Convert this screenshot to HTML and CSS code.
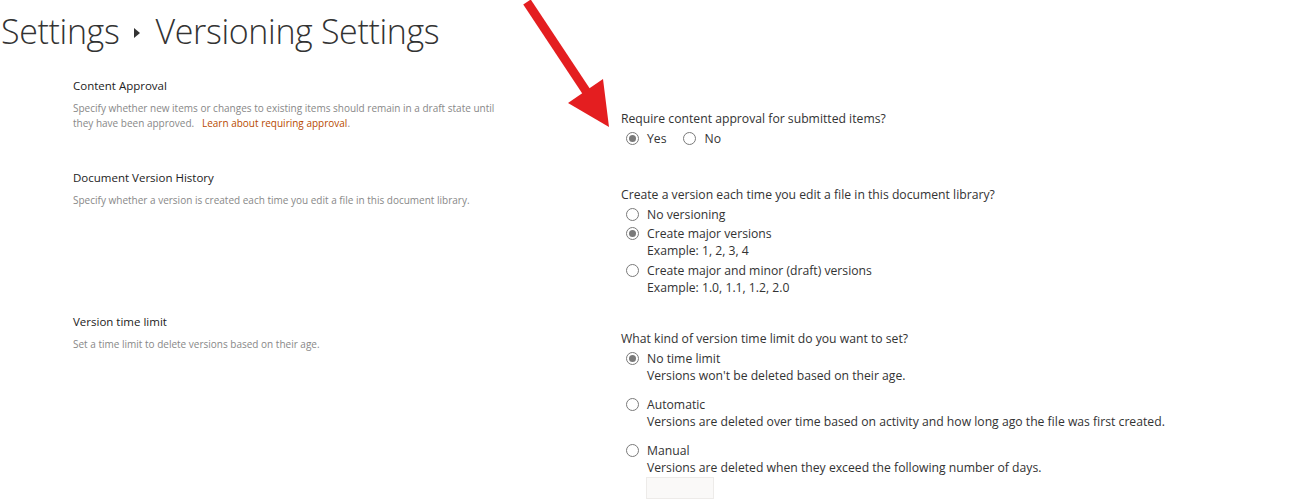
FILE: index.html
```html
<!DOCTYPE html>
<html lang="en">
  <head>
    <meta charset="UTF-8" />
    <title>Versioning Settings</title>
    <link rel="stylesheet" href="styles.css">
  </head>
  <body>
    <h1 class="page-title">
      <span>Settings</span>
      <span class="crumb-sep"></span>
      <span>Versioning Settings</span>
    </h1>

    <!-- flecha roja de anotación -->
    <svg class="annot-arrow" width="140" height="135" viewBox="0 0 140 135">
      <line x1="47" y1="2" x2="108" y2="94" stroke="#e41e20" stroke-width="9" />
      <polygon points="88,103 123,79 129,127" fill="#e41e20" />
    </svg>

    <div class="settings">
      <!-- Content Approval -->
      <section class="row row-approval">
        <div class="label-col">
          <h3>Content Approval</h3>
          <p>Specify whether new items or changes to existing items should remain in a draft state until they have been approved.&nbsp;&nbsp; <a href="#">Learn about requiring approval</a>.</p>
        </div>
        <div class="field-col">
          <div class="question">Require content approval for submitted items?</div>
          <div class="inline-opts">
            <label class="opt"><input type="radio" name="approval" checked><span>Yes</span></label>
            <label class="opt"><input type="radio" name="approval"><span>No</span></label>
          </div>
        </div>
      </section>

      <!-- Document Version History -->
      <section class="row row-history">
        <div class="label-col">
          <h3>Document Version History</h3>
          <p>Specify whether a version is created each time you edit a file in this document library.</p>
        </div>
        <div class="field-col">
          <div class="question">Create a version each time you edit a file in this document library?</div>
          <label class="opt"><input type="radio" name="history"><span>No versioning</span></label>
          <label class="opt"><input type="radio" name="history" checked><span>Create major versions</span></label>
          <div class="hint">Example: 1, 2, 3, 4</div>
          <label class="opt"><input type="radio" name="history"><span>Create major and minor (draft) versions</span></label>
          <div class="hint">Example: 1.0, 1.1, 1.2, 2.0</div>
        </div>
      </section>

      <!-- Version time limit -->
      <section class="row row-limit">
        <div class="label-col">
          <h3>Version time limit</h3>
          <p>Set a time limit to delete versions based on their age.</p>
        </div>
        <div class="field-col">
          <div class="question">What kind of version time limit do you want to set?</div>
          <label class="opt"><input type="radio" name="limit" checked><span>No time limit</span></label>
          <div class="hint spaced">Versions won't be deleted based on their age.</div>
          <label class="opt"><input type="radio" name="limit"><span>Automatic</span></label>
          <div class="hint spaced">Versions are deleted over time based on activity and how long ago the file was first created.</div>
          <label class="opt"><input type="radio" name="limit"><span>Manual</span></label>
          <div class="hint">Versions are deleted when they exceed the following number of days.</div>
          <input class="days" type="text">
        </div>
      </section>
    </div>
  </body>
</html>
```

FILE: styles.css
```css
body {
  margin: 0;
  font-family: "Open Sans", "Noto Sans", Arial, sans-serif;
  color: #333;
  background: #fff;
  position: relative;
  overflow: hidden;
}

.page-title {
  margin: 0;
  padding: 6px 0 0 1px;
  height: 50px;
  font-weight: 300;
  font-size: 34px;
  line-height: 42px;
  color: #333;
  display: flex;
  align-items: center;
  gap: 15px;
  letter-spacing: -0.35px;
}

.crumb-sep {
  width: 0;
  height: 0;
  border-top: 5px solid transparent;
  border-bottom: 5px solid transparent;
  border-left: 6px solid #333;
  margin-top: 3px;
}

.annot-arrow {
  position: absolute;
  left: 480px;
  top: 0;
}

.settings {
  padding-left: 73px;
}

.row {
  display: grid;
  grid-template-columns: 548px auto;
}

.label-col h3 {
  margin: 0;
  font-size: 11.5px;
  font-weight: 400;
  line-height: 16px;
  color: #222;
}

.label-col p {
  margin: 7px 0 0;
  width: 440px;
  font-size: 10px;
  line-height: 15px;
  color: #888;
}

.label-col a {
  color: #b84a00;
  text-decoration: none;
}

.field-col {
  font-size: 12.2px;
  color: #333;
  display: flex;
  flex-direction: column;
  align-items: flex-start;
  padding-top: 16px;
}

.question {
  line-height: 18px;
  margin-bottom: 1px;
}

.opt {
  display: flex;
  align-items: center;
  height: 19px;
  padding-left: 5px;
}

.opt input {
  appearance: none;
  margin: 0 8px 0 0;
  width: 13px;
  height: 13px;
  border: 1px solid #7a7a7a;
  border-radius: 50%;
  box-sizing: border-box;
  display: grid;
  place-items: center;
}

.opt input:checked::after {
  content: "";
  width: 7px;
  height: 7px;
  border-radius: 50%;
  background: #7a7a7a;
}

.inline-opts {
  display: flex;
  gap: 12px;
}

.hint {
  padding-left: 26px;
  line-height: 15px;
  margin-bottom: 3px;
}

.hint.spaced {
  margin-bottom: 12px;
}

.days {
  margin: -1px 0 0 25px;
  width: 68px;
  height: 22px;
  box-sizing: border-box;
  border: 1px solid #edebe9;
  background: #faf9f8;
}

.row-approval {
  padding-top: 22px;
}

.row-approval .field-col {
  padding-top: 32px;
}

.row-history {
  padding-top: 22px;
}

.row-limit {
  padding-top: 16px;
}
```
